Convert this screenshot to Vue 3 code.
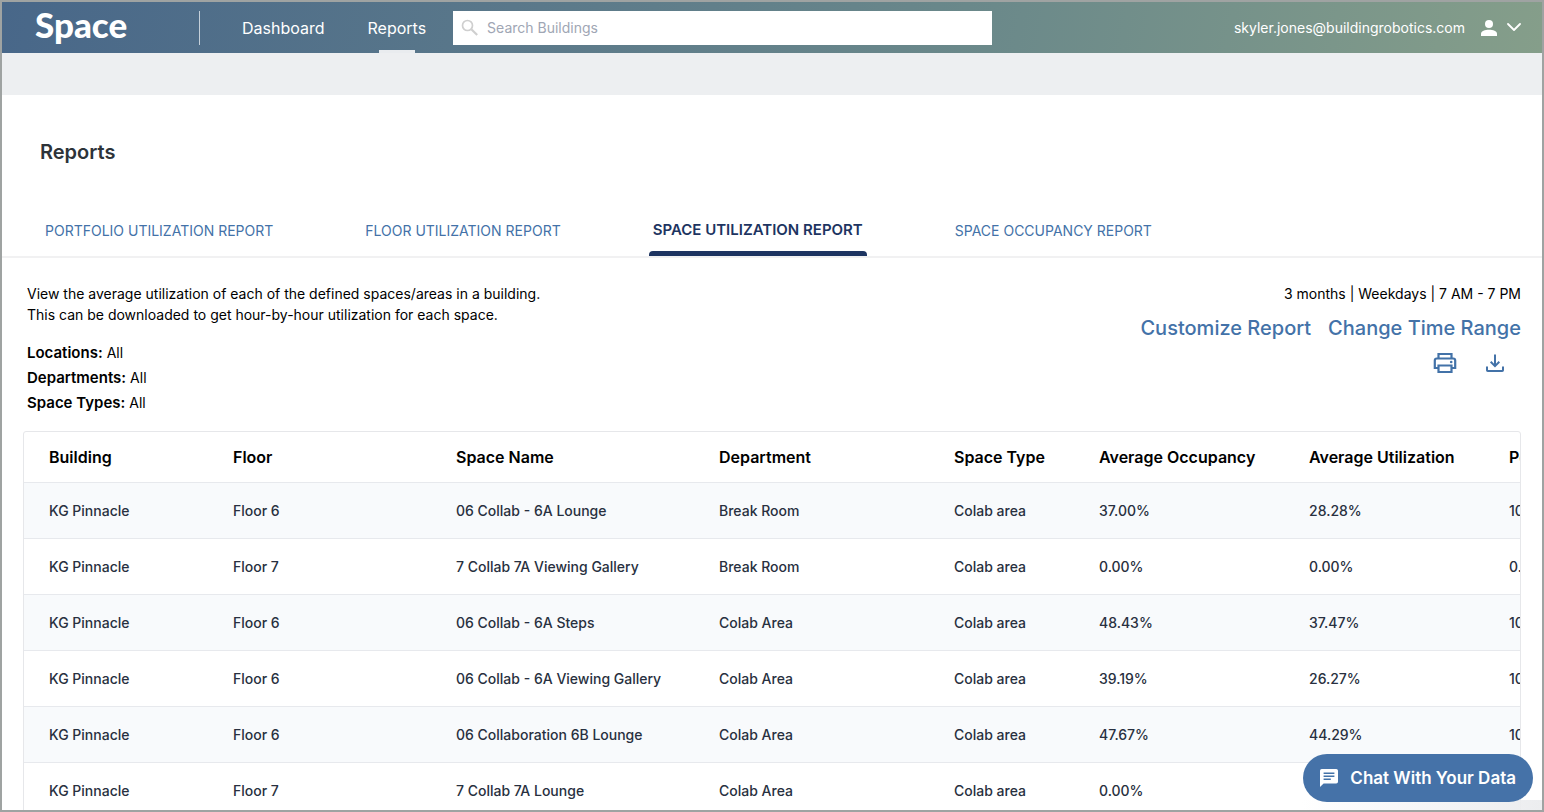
<script setup>
import { ref } from 'vue'

const query = ref('')
const navLinks = [
  { label: 'Dashboard', active: false },
  { label: 'Reports', active: true },
]
const tabs = [
  { label: 'PORTFOLIO UTILIZATION REPORT', active: false },
  { label: 'FLOOR UTILIZATION REPORT', active: false },
  { label: 'SPACE UTILIZATION REPORT', active: true },
  { label: 'SPACE OCCUPANCY REPORT', active: false },
]
const filters = [
  { label: 'Locations:', value: 'All' },
  { label: 'Departments:', value: 'All' },
  { label: 'Space Types:', value: 'All' },
]
const columns = [
  { label: 'Building', name: 'building' },
  { label: 'Floor', name: 'floor' },
  { label: 'Space Name', name: 'space' },
  { label: 'Department', name: 'department' },
  { label: 'Space Type', name: 'type' },
  { label: 'Average Occupancy', name: 'occupancy' },
  { label: 'Average Utilization', name: 'utilization' },
  { label: 'Peak', name: 'peak' },
]
const rows = [
  ['KG Pinnacle', 'Floor 6', '06 Collab - 6A Lounge', 'Break Room', 'Colab area', '37.00%', '28.28%', '100%'],
  ['KG Pinnacle', 'Floor 7', '7 Collab 7A Viewing Gallery', 'Break Room', 'Colab area', '0.00%', '0.00%', '0.00%'],
  ['KG Pinnacle', 'Floor 6', '06 Collab - 6A Steps', 'Colab Area', 'Colab area', '48.43%', '37.47%', '100%'],
  ['KG Pinnacle', 'Floor 6', '06 Collab - 6A Viewing Gallery', 'Colab Area', 'Colab area', '39.19%', '26.27%', '100%'],
  ['KG Pinnacle', 'Floor 6', '06 Collaboration 6B Lounge', 'Colab Area', 'Colab area', '47.67%', '44.29%', '100%'],
  ['KG Pinnacle', 'Floor 7', '7 Collab 7A Lounge', 'Colab Area', 'Colab area', '0.00%', '', ''],
]
</script>

<template>
  <div class="app">
    <header class="topbar">
      <a class="brand" href="#">Space</a>
      <nav class="nav">
        <a v-for="link in navLinks" :key="link.label" href="#" :class="{ active: link.active }">{{ link.label }}</a>
      </nav>
      <label class="search">
        <svg viewBox="0 0 18 18" width="18" height="18" aria-hidden="true">
          <circle cx="6.5" cy="6.5" r="5" fill="none" stroke="#cfcfcf" stroke-width="1.7" />
          <path d="M10.3 10.3 16.2 16" fill="none" stroke="#cfcfcf" stroke-width="2.2" />
        </svg>
        <input v-model="query" type="text" placeholder="Search Buildings" aria-label="Search Buildings" />
      </label>
      <button class="account" type="button">
        <span>skyler.jones@buildingrobotics.com</span>
        <svg class="person" viewBox="0 0 16 16" width="16" height="16" aria-hidden="true">
          <circle cx="8" cy="4" r="4" fill="#fff" />
          <path d="M0 16v-2.200C0 11.200 4 9.800 8 9.800s8 1.400 8 4V16z" fill="#fff" />
        </svg>
        <svg class="chevron" viewBox="0 0 14 9" width="14" height="9" aria-hidden="true">
          <path d="M1 1l6 6 6-6" fill="none" stroke="#fff" stroke-width="1.8" stroke-linecap="round" stroke-linejoin="round" />
        </svg>
      </button>
    </header>
    <div class="band"></div>

    <main class="page">
      <h1>Reports</h1>
      <nav class="tabs">
        <a v-for="tab in tabs" :key="tab.label" href="#" :class="{ active: tab.active }">{{ tab.label }}</a>
      </nav>

      <section class="summary">
        <div class="intro">
          <p>
            View the average utilization of each of the defined spaces/areas in a building.<br />
            This can be downloaded to get hour-by-hour utilization for each space.
          </p>
          <dl>
            <div v-for="filter in filters" :key="filter.label">
              <dt>{{ filter.label }}</dt>
              <dd>{{ filter.value }}</dd>
            </div>
          </dl>
        </div>
        <div class="actions">
          <div class="range">3 months | Weekdays | 7 AM - 7 PM</div>
          <div class="links">
            <button type="button">Customize Report</button>
            <button type="button">Change Time Range</button>
          </div>
          <div class="icons">
            <button type="button" aria-label="Print">
              <svg viewBox="0 0 24 22" width="24" height="22" fill="none" stroke="#4372a8" stroke-width="2.200" aria-hidden="true">
                <path d="M5.500 6V2h13V6" />
                <path d="M5.500 16H1.800V8.500Q1.800 6.500 3.800 6.500h16.400q2 0 2 2V16h-3.700" />
                <path d="M5.500 13.500h13v6.500h-13z" />
                <circle cx="18.200" cy="10" r="1.300" fill="#4372a8" stroke="none" />
              </svg>
            </button>
            <button type="button" aria-label="Download">
              <svg viewBox="0 0 18 18" width="18" height="18" fill="none" stroke="#4372a8" stroke-width="2" aria-hidden="true">
                <path d="M9 .5v11.500M4.700 7.800l4.300 4.300L13.300 7.800" />
                <path d="M1 12.500v3.700q0 .8.800.800h14.400q.8 0 .8-.8v-3.700" />
              </svg>
            </button>
          </div>
        </div>
      </section>

      <div class="table-wrap">
        <table>
          <colgroup>
            <col v-for="col in columns" :key="col.name" :class="col.name" />
          </colgroup>
          <thead>
            <tr>
              <th v-for="col in columns" :key="col.name" scope="col">{{ col.label }}</th>
            </tr>
          </thead>
          <tbody>
            <tr v-for="(row, r) in rows" :key="r">
              <td v-for="(cell, c) in row" :key="c">{{ cell }}</td>
            </tr>
          </tbody>
        </table>
      </div>
    </main>

    <div class="fade"></div>
    <button class="chat" type="button">
      <svg viewBox="0 0 18 18" width="18" height="18" aria-hidden="true">
        <path d="M1.800 0h14.400Q18 0 18 1.800v10.900q0 1.800-1.800 1.800H3.600L0 18V1.800Q0 0 1.800 0z" fill="#fff" />
        <path d="M3.600 4.200h10.800M3.600 7.200h10.800M3.600 10.200h7.200" stroke="#4372a8" stroke-width="1.500" />
      </svg>
      <span>Chat With Your Data</span>
    </button>
  </div>
</template>

<style>
body {
  margin: 0;
}
</style>

<style scoped>
.app {
  position: relative;
  box-sizing: border-box;
  height: 100vh;
  overflow: hidden;
  border: 2px solid #9fa3a2;
  background: #fff;
  color: #000;
  font-family: Inter, 'Liberation Sans', sans-serif;
  font-size: 14px;
}
a {
  color: inherit;
  text-decoration: none;
}
button {
  padding: 0;
  border: 0;
  background: none;
  color: inherit;
  font: inherit;
}
svg {
  display: block;
  flex: none;
}
.topbar {
  display: flex;
  align-items: center;
  box-sizing: border-box;
  height: 51px;
  padding: 0 21px 0 33px;
  background: linear-gradient(100deg, #486789 0%, #5a788a 33%, #6c8a8a 66%, #859e8a 100%);
  color: #fff;
}
.brand {
  box-sizing: border-box;
  width: 165px;
  height: 34px;
  border-right: 1px solid #c5d0da;
  font-family: Lato, sans-serif;
  font-size: 35px;
  font-weight: 900;
  line-height: 26px;
}
.nav {
  display: flex;
  align-self: stretch;
  gap: 43px;
  margin: 0 27px 0 42px;
  font-size: 16px;
  line-height: 52px;
}
.nav a {
  position: relative;
}
.nav .active::after {
  content: '';
  position: absolute;
  right: 11px;
  bottom: 0;
  left: 11px;
  height: 3px;
  background: #e9ecef;
}
.search {
  display: flex;
  flex: 0 1 539px;
  align-items: center;
  gap: 8px;
  box-sizing: border-box;
  height: 34px;
  padding: 0 8px;
  background: #fff;
}
.search input {
  flex: 1;
  min-width: 0;
  padding: 0;
  border: 0;
  outline: 0;
  background: transparent;
  font: inherit;
}
.search input::placeholder {
  color: #a0a6b4;
  opacity: 1;
}
.account {
  display: flex;
  align-items: center;
  margin-left: auto;
}
.person {
  margin: 0 10px 0 16px;
}
.band {
  height: 42px;
  background: #edeff1;
}
h1 {
  margin: 0;
  padding: 43px 38px 0;
  color: #2d3339;
  font-size: 20px;
  font-weight: 600;
  line-height: 28px;
}
.tabs {
  display: flex;
  gap: 84px;
  padding: 47px 39px 0;
  border-bottom: 2px solid #f1f1f2;
}
.tabs a {
  padding: 9px 4px 11px;
  border-bottom: 5px solid transparent;
  color: #4372a8;
  line-height: 18px;
}
.tabs .active {
  position: relative;
  padding: 8px 4px 12px;
  color: #1d3461;
  font-size: 15px;
  font-weight: 600;
}
.tabs .active::after {
  content: '';
  position: absolute;
  right: 0;
  bottom: -5px;
  left: 0;
  height: 5px;
  border-radius: 4px 4px 0 0;
  background: #1d3461;
}
.summary {
  display: flex;
  justify-content: space-between;
  padding: 25px 21px 16px 25px;
}
p {
  margin: 0;
  line-height: 21px;
}
dl {
  margin: 15px 0 0;
  line-height: 25px;
}
dl div {
  display: flex;
  gap: 4px;
}
dt {
  font-size: 15px;
  font-weight: 600;
}
dd {
  margin: 0;
}
.range {
  line-height: 21px;
  text-align: right;
}
.links {
  display: flex;
  justify-content: flex-end;
  gap: 17px;
  margin-top: 10px;
  color: #4372a8;
  font-size: 20px;
  font-weight: 500;
  line-height: 28px;
}
.icons {
  display: flex;
  align-items: center;
  justify-content: flex-end;
  gap: 29px;
  margin-top: 10px;
  padding-right: 17px;
}
.table-wrap {
  overflow: hidden;
  margin: 0 21px;
  border: 1px solid #e6e7ea;
  border-radius: 3px 3px 0 0;
}
table {
  width: 1700px;
  border-spacing: 0;
  table-layout: fixed;
}
.building { width: 184px; }
.floor { width: 223px; }
.space { width: 263px; }
.department { width: 235px; }
.type { width: 145px; }
.occupancy { width: 210px; }
.utilization { width: 200px; }
th,
td {
  box-sizing: border-box;
  padding: 0 0 0 25px;
  text-align: left;
  white-space: nowrap;
}
th {
  height: 51px;
  border-bottom: 1px solid #e7e9ed;
  font-size: 16px;
  font-weight: 600;
}
td {
  height: 56px;
  border-bottom: 1px solid #e7e9ed;
  color: #283040;
  font-weight: 500;
}
tbody tr:nth-child(odd) {
  background: #f8fafc;
}
.fade {
  position: absolute;
  right: 0;
  bottom: 0;
  width: 240px;
  height: 10px;
  background: linear-gradient(90deg, rgba(236, 237, 239, 0), #ecedef);
}
.chat {
  position: absolute;
  right: 9px;
  bottom: 8px;
  display: flex;
  align-items: center;
  gap: 12px;
  height: 48px;
  padding: 0 17px;
  border-radius: 24px;
  background: #4572a8;
  color: #fff;
  font-size: 17px;
  font-weight: 600;
}
</style>
